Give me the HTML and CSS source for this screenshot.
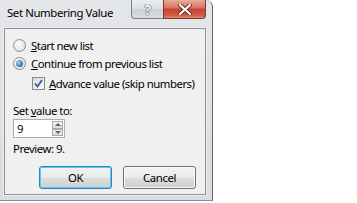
FILE: index.html
```html
<!DOCTYPE html>
<html lang="en">
<head>
    <meta charset="UTF-8">
    <title>Set Numbering Value</title>
    <link rel="stylesheet" href="styles.css">
</head>
<body>

    <div class="window">
        <!-- Barra de titulo -->
        <div class="titlebar">
            <span class="title">Set Numbering Value</span>
            <div class="caption-buttons">
                <div class="cap-btn help">?</div>
                <div class="cap-btn close">
                    <svg width="14" height="11" viewBox="0 0 14 11">
                        <path d="M2 1 L12 10 M12 1 L2 10" stroke="#6b2a22" stroke-width="4" stroke-linecap="round"/>
                        <path d="M2 1 L12 10 M12 1 L2 10" stroke="#fff" stroke-width="2.2" stroke-linecap="round"/>
                    </svg>
                </div>
            </div>
        </div>

        <div class="client">
            <div class="row first">
                <span class="radio"></span>
                <span><u>S</u>tart new list</span>
            </div>
            <div class="row second">
                <span class="radio checked"></span>
                <span><u>C</u>ontinue from previous list</span>
            </div>
            <div class="row third">
                <span class="checkbox">
                    <svg width="9" height="9" viewBox="0 0 9 9">
                        <path d="M1 4.5 L3.5 7.5 L8 1" fill="none" stroke="#3d56a6" stroke-width="1.8"/>
                    </svg>
                </span>
                <span><u>A</u>dvance value (skip numbers)</span>
            </div>

            <div class="label">Set <u>v</u>alue to:</div>
            <div class="spin">
                <span class="spin-value">9</span>
                <div class="spin-buttons">
                    <div class="spin-btn"><span class="arrow up"></span></div>
                    <div class="spin-btn"><span class="arrow down"></span></div>
                </div>
            </div>
            <div class="preview">Preview: 9.</div>

            <div class="buttons">
                <button class="btn default">OK</button>
                <button class="btn">Cancel</button>
            </div>
        </div>
    </div>

</body>
</html>
```

FILE: styles.css
```css
* {
    margin: 0;
    padding: 0;
    box-sizing: border-box;
}

body {
    background-color: #fff;
    font-family: 'Noto Sans', 'Open Sans', sans-serif;
    font-size: 11.4px;
    letter-spacing: -0.5px;
    color: #000;
    white-space: nowrap;
}

/* Janela */
.window {
    width: 213px;
    height: 201px;
    background: linear-gradient(#e4e6e9, #d9dce0);
    border-top-right-radius: 7px;
    border-right: 1px solid #5e6166;
    border-bottom: 1px solid #8c9096;
    display: flex;
    flex-direction: column;
}

.titlebar {
    height: 28px;
    display: flex;
    justify-content: space-between;
    align-items: flex-start;
}

.title {
    padding: 5px 0 0 7px;
    line-height: 16px;
    letter-spacing: -0.4px;
}

.caption-buttons {
    display: flex;
    margin-right: 6px;
}

.cap-btn {
    height: 19px;
    display: flex;
    justify-content: center;
    align-items: center;
    border: 1px solid #7b7f85;
    border-top: none;
}

.help {
    width: 32px;
    border-bottom-left-radius: 4px;
    border-right: none;
    background: linear-gradient(#eceef0, #dcdfe2 50%, #cdd1d5 51%, #d9dde1);
    color: #f4f4f4;
    font-weight: bold;
    font-size: 14px;
    text-shadow: 0 0 1px #555, 0 0 1px #555, 0 0 1px #555;
}

.close {
    width: 43px;
    border-bottom-right-radius: 4px;
    border-color: #7a3a31;
    background: linear-gradient(#e6ab9e, #d7725f 45%, #c5432f 50%, #d15a44 85%, #e28a6f);
}

.client {
    flex-grow: 1;
    margin: 0 6px 5px 4px;
    border: 1px solid #8d9095;
    background-color: #f0f0f0;
    padding: 0 0 0 8px;
    box-shadow: 0 0 0 1px #eef0f2;
}

.row {
    display: flex;
    align-items: center;
    gap: 5px;
    height: 16px;
}

.row.first { margin-top: 8px; }
.row.second { margin-top: 2px; }
.row.third { margin-top: 4px; padding-left: 19px; gap: 4px; }

.radio {
    width: 13px;
    height: 13px;
    border-radius: 50%;
    border: 1px solid #8a8c8e;
    background: radial-gradient(circle at 40% 35%, #fdfdfd, #d8d9db);
    position: relative;
}

.radio.checked::after {
    content: "";
    position: absolute;
    top: 2px;
    left: 2px;
    width: 7px;
    height: 7px;
    border-radius: 50%;
    background: radial-gradient(circle at 35% 35%, #a8d6f6, #2d6fb3 70%, #1f4f8c);
}

.checkbox {
    width: 13px;
    height: 13px;
    border: 1px solid #8a8c8e;
    background: linear-gradient(135deg, #d9dadc, #fafafa);
    display: flex;
    justify-content: center;
    align-items: center;
}

.label {
    margin-top: 12px;
    line-height: 16px;
}

.spin {
    width: 52px;
    height: 19px;
    border: 1px solid #abadb3;
    background-color: #fff;
    display: flex;
    justify-content: space-between;
}

.spin-value {
    padding-left: 3px;
    line-height: 17px;
}

.spin-buttons {
    width: 12px;
    display: flex;
    flex-direction: column;
    padding: 1px 1px 1px 0;
}

.spin-btn {
    flex: 1;
    border: 1px solid #a7a9ac;
    background: linear-gradient(#f5f5f5, #dcdcdc);
    display: flex;
    justify-content: center;
    align-items: center;
}

.arrow {
    width: 0;
    height: 0;
    border-left: 3px solid transparent;
    border-right: 3px solid transparent;
}

.arrow.up { border-bottom: 3px solid #4d6185; }
.arrow.down { border-top: 3px solid #4d6185; }

.preview {
    margin-top: 3px;
    line-height: 16px;
}

.buttons {
    display: flex;
    gap: 11px;
    margin: 9px 0 0 26px;
}

.btn {
    width: 73px;
    height: 23px;
    border: 1px solid #707070;
    border-radius: 3px;
    background: linear-gradient(#f2f2f2, #ebebeb 50%, #dddddd 51%, #cfcfcf);
    font-family: 'Noto Sans', 'Open Sans', sans-serif;
    font-size: 11.4px;
    letter-spacing: -0.4px;
    color: #000;
    box-shadow: inset 0 0 0 1px #fcfcfc;
}

.btn.default {
    border-color: #3c7fb1;
    box-shadow: inset 0 0 0 1px #48d1ff;
}
```
